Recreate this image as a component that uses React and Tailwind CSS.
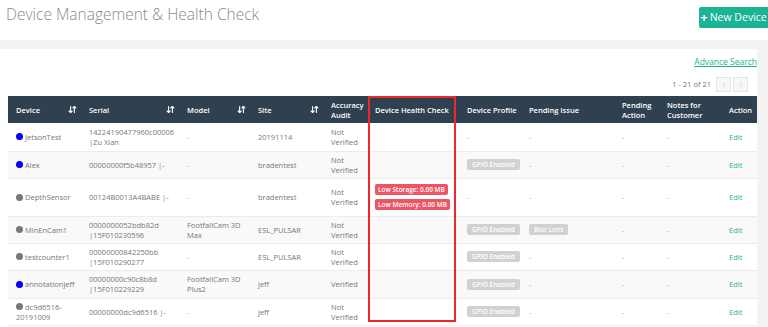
import React from "react";
import { ArrowDownUp, ChevronLeft, ChevronRight } from "lucide-react";

const cols = [73, 98, 71, 73, 46, 88, 64, 93, 45, 62, 36];

const rows = [
  {
    dot: "blue",
    name: "JetsonTest",
    serial: ["14224190477960c00006", "|Zu Xian"],
    model: ["-"],
    site: "20191114",
    audit: ["Not", "Verified"],
    health: [],
    profile: null,
    issue: null,
    h: "h-[28px]",
    bg: "bg-white",
  },
  {
    dot: "blue",
    name: "Alex",
    serial: ["00000000f5b48957 |-"],
    model: ["-"],
    site: "bradentest",
    audit: ["Not", "Verified"],
    health: [],
    profile: "GPIO Enabled",
    issue: null,
    h: "h-[27px]",
    bg: "bg-[#f9f9f9]",
  },
  {
    dot: "gray",
    name: "DepthSensor",
    serial: ["00124B0013A4BABE |-"],
    model: ["-"],
    site: "bradentest",
    audit: ["Not", "Verified"],
    health: ["Low Storage: 0.00 MB", "Low Memory: 0.00 MB"],
    profile: null,
    issue: null,
    h: "h-[38px]",
    bg: "bg-white",
  },
  {
    dot: "gray",
    name: "MinEnCam1",
    serial: ["0000000052bdb82d", "|15F010230596"],
    model: ["FootfallCam 3D", "Max"],
    site: "ESL_PULSAR",
    audit: ["Not", "Verified"],
    health: [],
    profile: "GPIO Enabled",
    issue: "Blur Lens",
    h: "h-[27px]",
    bg: "bg-[#f9f9f9]",
  },
  {
    dot: "gray",
    name: "testcounter1",
    serial: ["00000000842250bb", "|15F010290277"],
    model: ["-"],
    site: "ESL_PULSAR",
    audit: ["Not", "Verified"],
    health: [],
    profile: "GPIO Enabled",
    issue: null,
    h: "h-[27px]",
    bg: "bg-white",
  },
  {
    dot: "blue",
    name: "annotationjeff",
    serial: ["00000000c90c8b8d", "|15F010229229"],
    model: ["FootfallCam 3D", "Plus2"],
    site: "jeff",
    audit: ["Verified"],
    health: [],
    profile: "GPIO Enabled",
    issue: null,
    h: "h-[28px]",
    bg: "bg-[#f9f9f9]",
  },
  {
    dot: "gray",
    name: ["dc9d6516-", "20191009"],
    serial: ["00000000dc9d6516 |-"],
    model: ["-"],
    site: "jeff",
    audit: ["Not", "Verified"],
    health: [],
    profile: "GPIO Enabled",
    issue: null,
    h: "h-[27px]",
    bg: "bg-white",
  },
];

function Lines({ items }) {
  return items.map((t, i) => <div key={i}>{t}</div>);
}

function Dash() {
  return <span className="text-[#aaa]">-</span>;
}

function Dot({ color }) {
  return (
    <span
      className={`w-[7px] h-[7px] rounded-full shrink-0 ${
        color === "blue" ? "bg-[#0000ff]" : "bg-[#777]"
      }`}
    />
  );
}

function Tag({ children }) {
  return (
    <span className="inline-block bg-[#d1d1d1] text-white font-semibold text-[6.5px] leading-[11px] px-[5px] rounded-[2px]">
      {children}
    </span>
  );
}

function SortTh({ children }) {
  return (
    <th className="pl-2 pr-1 text-left font-semibold">
      <div className="flex items-center justify-between">
        <span>{children}</span>
        <ArrowDownUp size={9} strokeWidth={3} />
      </div>
    </th>
  );
}

function App() {
  return (
    <div
      className="w-[768px] h-[327px] overflow-hidden bg-[#f3f3f4] text-[#777]"
      style={{ fontFamily: '"Open Sans", "Liberation Sans", sans-serif' }}
    >
      {/* Page header */}
      <div className="h-[40px] bg-white flex justify-between items-start">
        <h1 className="pl-[6px] pt-[3px] text-[15.5px] font-light text-[#8a8a8a]">
          Device Management &amp; Health Check
        </h1>
        <button className="mt-[7px] h-[21px] w-[69px] bg-[#1ab394] text-white text-[10.5px] rounded-l-[2px] flex items-center justify-center gap-[2px]">
          <span className="font-bold text-[13px] leading-none">+</span>
          New Device
        </button>
      </div>

      <div className="pt-[9px] pr-[11px]">
        <div className="bg-white pl-2 h-[300px]">
          {/* Top controls */}
          <div className="flex justify-end pt-[9px] h-[24px]">
            <a className="text-[8.5px] text-[#1ab394] underline leading-none">
              Advance Search
            </a>
          </div>
          <div className="flex justify-end items-center gap-[2px] h-[23px] pr-[9px]">
            <span className="text-[7.5px] mr-[3px]">1 - 21 of 21</span>
            <span className="w-[15px] h-[15px] border border-[#e5e6e7] bg-[#f7f7f7] flex items-center justify-center text-[#ccc]">
              <ChevronLeft size={8} />
            </span>
            <span className="w-[15px] h-[15px] border border-[#e5e6e7] bg-[#f7f7f7] flex items-center justify-center text-[#ccc]">
              <ChevronRight size={8} />
            </span>
          </div>

          {/* Table */}
          <div className="relative">
            <table className="table-fixed border-collapse w-[749px] text-[7.5px] leading-[10px]">
              <colgroup>
                {cols.map((w, i) => (
                  <col key={i} style={{ width: w }} />
                ))}
              </colgroup>
              <thead>
                <tr className="h-[27px] bg-[#2f4050] text-white">
                  <SortTh>Device</SortTh>
                  <SortTh>Serial</SortTh>
                  <SortTh>Model</SortTh>
                  <SortTh>Site</SortTh>
                  <th className="pl-2 text-left font-semibold">Accuracy Audit</th>
                  <th className="pl-[6px] text-left font-semibold">Device Health Check</th>
                  <th className="pl-[10px] text-left font-semibold">Device Profile</th>
                  <th className="pl-2 text-left font-semibold">Pending Issue</th>
                  <th className="pl-2 text-left font-semibold">Pending Action</th>
                  <th className="pl-2 text-left font-semibold">Notes for Customer</th>
                  <th className="pl-2 text-left font-semibold">Action</th>
                </tr>
              </thead>
              <tbody>
                {rows.map((r, i) => (
                  <tr key={i} className={`${r.h} ${r.bg} border-b border-[#ececec]`}>
                    <td className="pl-2">
                      {Array.isArray(r.name) ? (
                        <div>
                          <div className="flex items-center gap-[2px]">
                            <Dot color={r.dot} />
                            {r.name[0]}
                          </div>
                          <div>{r.name[1]}</div>
                        </div>
                      ) : (
                        <div className="flex items-center gap-[2px]">
                          <Dot color={r.dot} />
                          {r.name}
                        </div>
                      )}
                    </td>
                    <td className="pl-2">
                      <Lines items={r.serial} />
                    </td>
                    <td className="pl-2">
                      {r.model[0] === "-" ? <Dash /> : <Lines items={r.model} />}
                    </td>
                    <td className="pl-2">{r.site}</td>
                    <td className="pl-2">
                      <Lines items={r.audit} />
                    </td>
                    <td className="pl-[6px]">
                      {r.health.map((t, j) => (
                        <div
                          key={j}
                          className={`inline-block bg-[#ed5565] text-white font-semibold text-[6.5px] leading-[11px] px-[3px] rounded-[2px] ${
                            j > 0 ? "mt-[4px]" : ""
                          }`}
                        >
                          {t}
                        </div>
                      ))}
                    </td>
                    <td className="pl-[10px]">
                      {r.profile ? <Tag>{r.profile}</Tag> : <Dash />}
                    </td>
                    <td className="pl-2">
                      {r.issue ? <Tag>{r.issue}</Tag> : <Dash />}
                    </td>
                    <td className="pl-2">
                      <Dash />
                    </td>
                    <td className="pl-2">
                      <Dash />
                    </td>
                    <td className="pl-2 text-[#1ab394]">Edit</td>
                  </tr>
                ))}
              </tbody>
            </table>
            {/* Highlight box over health check column */}
            <div className="absolute left-[360px] top-0 w-[88px] h-[226px] border-2 border-[#f0262b] pointer-events-none" />
          </div>
        </div>
      </div>
    </div>
  );
}

export default App;
